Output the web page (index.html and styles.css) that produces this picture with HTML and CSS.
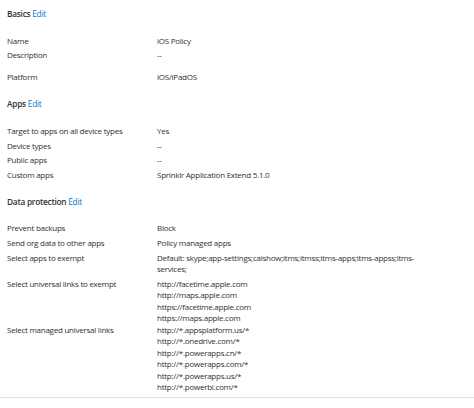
FILE: index.html
```html
<!DOCTYPE html>
<html lang="en">
<head>
    <meta charset="UTF-8">
    <meta name="viewport" content="width=device-width, initial-scale=1.0">
    <title>iOS Policy</title>
    <link rel="stylesheet" href="styles.css">
</head>
<body>

<div class="scroll">
    <div class="section">
        <div class="section-title">Basics <a class="edit" href="#">Edit</a></div>
        <div class="row"><div class="label">Name</div><div class="value">iOS Policy</div></div>
        <div class="row tall"><div class="label">Description</div><div class="value">--</div></div>
        <div class="row"><div class="label">Platform</div><div class="value">iOS/iPadOS</div></div>
    </div>

    <div class="section">
        <div class="section-title">Apps <a class="edit" href="#">Edit</a></div>
        <div class="row"><div class="label">Target to apps on all device types</div><div class="value">Yes</div></div>
        <div class="row"><div class="label">Device types</div><div class="value">--</div></div>
        <div class="row"><div class="label">Public apps</div><div class="value">--</div></div>
        <div class="row"><div class="label">Custom apps</div><div class="value">Sprinklr Application Extend 5.1.0</div></div>
    </div>

    <div class="section">
        <div class="section-title">Data protection <a class="edit" href="#">Edit</a></div>
        <div class="row"><div class="label">Prevent backups</div><div class="value">Block</div></div>
        <div class="row"><div class="label">Send org data to other apps</div><div class="value">Policy managed apps</div></div>
        <div class="row"><div class="label">Select apps to exempt</div><div class="value">Default: skype;app-settings;calshow;itms;itmss;itms-apps;itms-appss;itms-services;</div></div>
        <div class="row list">
            <div class="label">Select universal links to exempt</div>
            <div class="value">
                <div>http://facetime.apple.com</div>
                <div>http://maps.apple.com</div>
                <div>https://facetime.apple.com</div>
                <div>https://maps.apple.com</div>
            </div>
        </div>
        <div class="row list">
            <div class="label">Select managed universal links</div>
            <div class="value">
                <div>http://*.appsplatform.us/*</div>
                <div>http://*.onedrive.com/*</div>
                <div>http://*.powerapps.cn/*</div>
                <div>http://*.powerapps.com/*</div>
                <div>http://*.powerapps.us/*</div>
                <div>http://*.powerbi.com/*</div>
                <div>http://*.service-now.com/*</div>
            </div>
        </div>
    </div>
</div>

<div class="footer"></div>

</body>
</html>
```

FILE: styles.css
```css
body {
    font-family: 'Open Sans', 'Noto Sans', sans-serif;
    font-size: 8px;
    letter-spacing: -0.25px;
    line-height: 11.4px;
    color: #323130;
    background-color: #fff;
    margin: 0;
    padding: 0;
}
.scroll {
    height: 397px;
    overflow: hidden;
    padding: 0 7px;
}
.section {
    padding-top: 12.3px;
}
.section:first-child {
    padding-top: 8.3px;
}
.section-title {
    font-weight: 600;
    font-size: 8.3px;
    margin-bottom: 15px;
}
.edit {
    color: #0078d4;
    font-weight: 400;
    text-decoration: none;
}
.row {
    display: grid;
    grid-template-columns: 150px 262px;
    padding-bottom: 3.3px;
}
.row.tall {
    padding-bottom: 10.6px;
}
.row.list {
    padding-bottom: 0.6px;
}
.footer {
    border-top: 1px solid #e1dfdd;
    height: 10px;
}
```
